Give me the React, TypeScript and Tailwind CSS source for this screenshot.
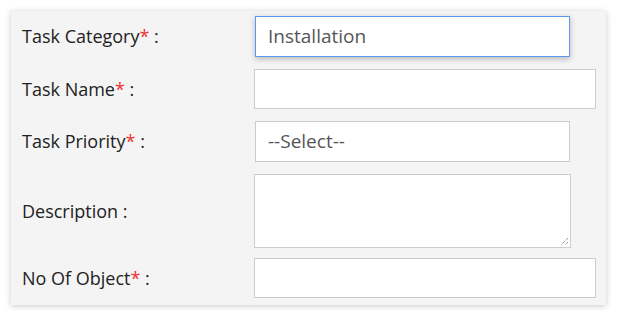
const FONT = { fontFamily: '"Open Sans", "Noto Sans", sans-serif' };

function Label({ text, required }: { text: string; required?: boolean }) {
  return (
    <div className="w-[243px] shrink-0 pl-[11px] text-[18px] text-[#222]">
      {text}
      {required && <span className="text-[#ee3333]">*</span>} :
    </div>
  );
}

export default function App() {
  return (
    <div className="min-h-screen bg-white p-[11px]" style={FONT}>
      <div className="w-[595px] h-[294px] bg-[#f4f4f4] shadow-[0_1px_6px_rgba(0,0,0,0.22)] pt-[5px]">
        {/* Task Category (focused) */}
        <div className="flex items-center">
          <Label text="Task Category" required />
          <div className="ml-px w-[315px] h-[41px] bg-white border border-[#5b97ee] shadow-[0_2px_6px_rgba(0,0,0,0.25)] flex items-center pl-[12px] text-[19px] text-[#555]">
            Installation
          </div>
        </div>

        {/* Task Name */}
        <div className="flex items-center mt-[12px]">
          <Label text="Task Name" required />
          <div className="w-[342px] h-[40px] bg-white border border-[#cccccc]" />
        </div>

        {/* Task Priority */}
        <div className="flex items-center mt-[12px]">
          <Label text="Task Priority" required />
          <div className="ml-px w-[315px] h-[41px] bg-white border border-[#cccccc] flex items-center pl-[12px] text-[19px] text-[#555]">
            --Select--
          </div>
        </div>

        {/* Description */}
        <div className="flex items-center mt-[12px]">
          <Label text="Description" />
          <div className="relative w-[317px] h-[74px] bg-white border border-[#cccccc]">
            <svg className="absolute right-[1px] bottom-[1px]" width="9" height="9" viewBox="0 0 9 9">
              <path d="M8 1L1 8M8 5L5 8" stroke="#666" strokeWidth="1" strokeDasharray="1 1" fill="none" />
            </svg>
          </div>
        </div>

        {/* No Of Object */}
        <div className="flex items-center mt-[10px]">
          <Label text="No Of Object" required />
          <div className="w-[342px] h-[40px] bg-white border border-[#cccccc]" />
        </div>
      </div>
    </div>
  );
}
